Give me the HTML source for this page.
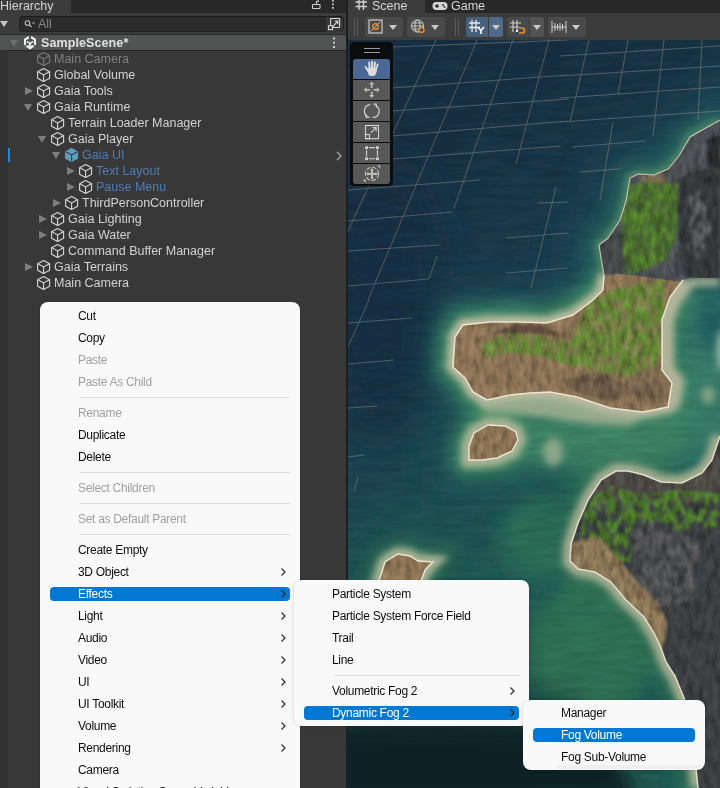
<!DOCTYPE html>
<html><head><meta charset="utf-8">
<style>
*{box-sizing:border-box}
html,body{margin:0;padding:0}
body{width:720px;height:788px;overflow:hidden;position:relative;background:#383838;font-family:"Liberation Sans",sans-serif;-webkit-font-smoothing:antialiased;}
.t,.mi{transform:translateZ(0)}
.abs{position:absolute}
.t{position:absolute;font-size:12.5px;line-height:16px;white-space:pre;letter-spacing:0}
.ard{position:absolute;width:0;height:0;border-left:4.3px solid transparent;border-right:4.3px solid transparent;border-top:7.5px solid #7e7e7e}
.arr{position:absolute;width:0;height:0;border-top:4.5px solid transparent;border-bottom:4.5px solid transparent;border-left:8px solid #7e7e7e}
.menu{position:absolute;background:#f9f9f9;border-radius:8px;box-shadow:0 0 3px rgba(0,0,0,0.10),-2px 1px 4px rgba(0,0,0,0.05)}
.mi{position:absolute;font-size:12px;line-height:16px;color:#0e0e0e;letter-spacing:-0.3px;white-space:pre}
.dis{color:#a0a0a0}
.sep{position:absolute;height:1px;background:#dedede}
.hl{position:absolute;background:#0078d4;border-radius:4px}
.chev{position:absolute;width:5px;height:5px;border-right:1.2px solid #2a2a2a;border-top:1.2px solid #2a2a2a;transform:rotate(45deg)}
.tb{position:absolute;background:#4a4a4a;border-radius:3px}
</style></head><body>


<div class="abs" style="left:0;top:0;width:346px;height:13px;background:#282828"></div>
<div class="abs" style="left:0;top:0;width:71px;height:13px;background:#3c3c3c"></div>
<div class="t" style="left:0;top:-2px;color:#d4d4d4;font-size:12.5px">Hierarchy</div>
<svg class="abs" style="left:310px;top:0" width="36" height="13" viewBox="0 0 36 13">
 <rect x="2.5" y="4.5" width="7.5" height="4" rx="0.8" fill="none" stroke="#d0d0d0" stroke-width="1.1"/>
 <path d="M6.5 4.5 V1.5 H8.2 V-1" fill="none" stroke="#d0d0d0" stroke-width="1.1"/>
 <rect x="22" y="0" width="1.8" height="1.8" fill="#c8c8c8"/><rect x="22" y="3.5" width="1.8" height="1.8" fill="#c8c8c8"/><rect x="22" y="7" width="1.8" height="1.8" fill="#c8c8c8"/>
</svg>
<div class="abs" style="left:0;top:13px;width:346px;height:22px;background:#3c3c3c"></div>
<div class="ard" style="left:0px;top:21px;border-top-color:#c4c4c4;border-left-width:4.5px;border-right-width:4.5px;border-top-width:6px"></div>
<div class="abs" style="left:19px;top:16px;width:325px;height:16px;background:#2b2b2b;border:1px solid #232323;border-top-color:#1c1c1c;border-radius:4px"></div>
<svg class="abs" style="left:24px;top:19px" width="12" height="10" viewBox="0 0 12 10"><circle cx="3.5" cy="4" r="2.3" fill="none" stroke="#bdbdbd" stroke-width="1.1"/><path d="M5.2 5.6 L7.5 8" stroke="#bdbdbd" stroke-width="1.2"/><path d="M8 3.5 h3 l-1.5 1.7z" fill="#bdbdbd"/></svg>
<div class="t" style="left:38px;top:16px;color:#858585">All</div>
<div class="abs" style="left:326px;top:17px;width:17px;height:15px;background:#383838;border-radius:0 4px 4px 0"></div>
<svg class="abs" style="left:326px;top:16px" width="17" height="16" viewBox="0 0 17 16"><rect x="4.6" y="2.5" width="9" height="9" rx="0.6" fill="none" stroke="#d8d8d8" stroke-width="1.1"/><rect x="2.5" y="9.8" width="4" height="3.8" fill="#3a3a3a" stroke="#d8d8d8" stroke-width="1.1"/><path d="M7 10.6 L11.6 5.2 M8.6 5 H11.8 V8.2" fill="none" stroke="#d8d8d8" stroke-width="1.1"/></svg>
<div class="abs" style="left:0;top:34px;width:346px;height:1px;background:#2a2a2a"></div>
<div class="abs" style="left:0;top:35px;width:346px;height:16px;background:#525453;border-bottom:1px solid #282828"></div>
<div class="abs" style="left:0;top:50px;width:8px;height:738px;background:#323232"></div>
<div class="abs" style="left:8px;top:148px;width:2px;height:14px;background:#1e88e5"></div>
<div class="ard" style="left:10px;top:40px;border-top-color:#6e6e6e"></div>
<svg class="abs" style="left:23px;top:35px" width="14" height="15" viewBox="0 0 14 15"><g fill="#f4f4f4"><path d="M5.6 1 L1 3.9 L1 10.6 L3 9.4 L3 5.3 L6.2 3.3 Z"/><path d="M8.4 1 L13 3.9 L13 10.6 L11 9.4 L11 5.3 L7.8 3.3 Z"/><path d="M7 7.6 L3.9 5.8 L3.9 7.5 L6.1 8.8 L6.1 11 L7.9 11 L7.9 8.8 L10.1 7.5 L10.1 5.8 Z"/><path d="M2.3 11.3 L7 14.6 L11.7 11.3 L9.3 10.1 L7 11.5 L4.7 10.1 Z"/><path d="M6.2 3.3 L7 4.6 L7.8 3.3 L7 1.2 Z" opacity="0.0"/></g></svg>
<div class="t" style="left:41px;top:35px;color:#e0e0e0;font-weight:bold;letter-spacing:0.1px">SampleScene*</div>
<svg class="abs" style="left:332px;top:37px" width="4" height="12"><rect x="1" y="0.5" width="2" height="2" fill="#c8c8c8"/><rect x="1" y="4.7" width="2" height="2" fill="#c8c8c8"/><rect x="1" y="9" width="2" height="2" fill="#c8c8c8"/></svg>

<svg class="abs" style="left:37px;top:52px" width="14" height="14" viewBox="0 0 14 14"><path d="M6.6 0.6 L12.6 3.7 L12.6 10.3 L6.6 13.4 L0.6 10.3 L0.6 3.7 Z" fill="none" stroke="#7a7a7a" stroke-width="1.1" stroke-linejoin="round"/><path d="M0.8 3.8 L6.6 6.9 L12.4 3.8 M6.6 6.9 L6.6 13.2" fill="none" stroke="#7a7a7a" stroke-width="1.1"/></svg>
<div class="t" style="left:54px;top:51px;color:#808080">Main Camera</div>
<svg class="abs" style="left:37px;top:68px" width="14" height="14" viewBox="0 0 14 14"><path d="M6.6 0.6 L12.6 3.7 L12.6 10.3 L6.6 13.4 L0.6 10.3 L0.6 3.7 Z" fill="none" stroke="#d8d8d8" stroke-width="1.1" stroke-linejoin="round"/><path d="M0.8 3.8 L6.6 6.9 L12.4 3.8 M6.6 6.9 L6.6 13.2" fill="none" stroke="#d8d8d8" stroke-width="1.1"/></svg>
<div class="t" style="left:54px;top:67px;color:#d2d2d2">Global Volume</div>
<div class="arr" style="left:25px;top:87px"></div>
<svg class="abs" style="left:37px;top:84px" width="14" height="14" viewBox="0 0 14 14"><path d="M6.6 0.6 L12.6 3.7 L12.6 10.3 L6.6 13.4 L0.6 10.3 L0.6 3.7 Z" fill="none" stroke="#d8d8d8" stroke-width="1.1" stroke-linejoin="round"/><path d="M0.8 3.8 L6.6 6.9 L12.4 3.8 M6.6 6.9 L6.6 13.2" fill="none" stroke="#d8d8d8" stroke-width="1.1"/></svg>
<div class="t" style="left:54px;top:83px;color:#d2d2d2">Gaia Tools</div>
<div class="ard" style="left:24px;top:104px"></div>
<svg class="abs" style="left:37px;top:100px" width="14" height="14" viewBox="0 0 14 14"><path d="M6.6 0.6 L12.6 3.7 L12.6 10.3 L6.6 13.4 L0.6 10.3 L0.6 3.7 Z" fill="none" stroke="#d8d8d8" stroke-width="1.1" stroke-linejoin="round"/><path d="M0.8 3.8 L6.6 6.9 L12.4 3.8 M6.6 6.9 L6.6 13.2" fill="none" stroke="#d8d8d8" stroke-width="1.1"/></svg>
<div class="t" style="left:54px;top:99px;color:#d2d2d2">Gaia Runtime</div>
<svg class="abs" style="left:51px;top:116px" width="14" height="14" viewBox="0 0 14 14"><path d="M6.6 0.6 L12.6 3.7 L12.6 10.3 L6.6 13.4 L0.6 10.3 L0.6 3.7 Z" fill="none" stroke="#d8d8d8" stroke-width="1.1" stroke-linejoin="round"/><path d="M0.8 3.8 L6.6 6.9 L12.4 3.8 M6.6 6.9 L6.6 13.2" fill="none" stroke="#d8d8d8" stroke-width="1.1"/></svg>
<div class="t" style="left:68px;top:115px;color:#d2d2d2">Terrain Loader Manager</div>
<div class="ard" style="left:38px;top:136px"></div>
<svg class="abs" style="left:51px;top:132px" width="14" height="14" viewBox="0 0 14 14"><path d="M6.6 0.6 L12.6 3.7 L12.6 10.3 L6.6 13.4 L0.6 10.3 L0.6 3.7 Z" fill="none" stroke="#d8d8d8" stroke-width="1.1" stroke-linejoin="round"/><path d="M0.8 3.8 L6.6 6.9 L12.4 3.8 M6.6 6.9 L6.6 13.2" fill="none" stroke="#d8d8d8" stroke-width="1.1"/></svg>
<div class="t" style="left:68px;top:131px;color:#d2d2d2">Gaia Player</div>
<div class="ard" style="left:52px;top:152px"></div>
<svg class="abs" style="left:65px;top:148px" width="14" height="14" viewBox="0 0 14 14"><path d="M6.6 0.6 L12.6 3.7 L12.6 10.3 L6.6 13.4 L0.6 10.3 L0.6 3.7 Z" fill="#5d9dbd" stroke="#5d9dbd" stroke-width="1.1" stroke-linejoin="round"/><path d="M0.8 3.8 L6.6 6.9 L12.4 3.8 M6.6 6.9 L6.6 13.2" fill="none" stroke="#2e3d45" stroke-width="1.1"/></svg>
<div class="t" style="left:82px;top:147px;color:#4e7db5">Gaia UI</div>
<div class="arr" style="left:67px;top:167px"></div>
<svg class="abs" style="left:79px;top:164px" width="14" height="14" viewBox="0 0 14 14"><path d="M6.6 0.6 L12.6 3.7 L12.6 10.3 L6.6 13.4 L0.6 10.3 L0.6 3.7 Z" fill="none" stroke="#d8d8d8" stroke-width="1.1" stroke-linejoin="round"/><path d="M0.8 3.8 L6.6 6.9 L12.4 3.8 M6.6 6.9 L6.6 13.2" fill="none" stroke="#d8d8d8" stroke-width="1.1"/></svg>
<div class="t" style="left:96px;top:163px;color:#4e7db5">Text Layout</div>
<div class="arr" style="left:67px;top:183px"></div>
<svg class="abs" style="left:79px;top:180px" width="14" height="14" viewBox="0 0 14 14"><path d="M6.6 0.6 L12.6 3.7 L12.6 10.3 L6.6 13.4 L0.6 10.3 L0.6 3.7 Z" fill="none" stroke="#d8d8d8" stroke-width="1.1" stroke-linejoin="round"/><path d="M0.8 3.8 L6.6 6.9 L12.4 3.8 M6.6 6.9 L6.6 13.2" fill="none" stroke="#d8d8d8" stroke-width="1.1"/></svg>
<div class="t" style="left:96px;top:179px;color:#4e7db5">Pause Menu</div>
<div class="arr" style="left:53px;top:199px"></div>
<svg class="abs" style="left:65px;top:196px" width="14" height="14" viewBox="0 0 14 14"><path d="M6.6 0.6 L12.6 3.7 L12.6 10.3 L6.6 13.4 L0.6 10.3 L0.6 3.7 Z" fill="none" stroke="#d8d8d8" stroke-width="1.1" stroke-linejoin="round"/><path d="M0.8 3.8 L6.6 6.9 L12.4 3.8 M6.6 6.9 L6.6 13.2" fill="none" stroke="#d8d8d8" stroke-width="1.1"/></svg>
<div class="t" style="left:82px;top:195px;color:#d2d2d2">ThirdPersonController</div>
<div class="arr" style="left:39px;top:215px"></div>
<svg class="abs" style="left:51px;top:212px" width="14" height="14" viewBox="0 0 14 14"><path d="M6.6 0.6 L12.6 3.7 L12.6 10.3 L6.6 13.4 L0.6 10.3 L0.6 3.7 Z" fill="none" stroke="#d8d8d8" stroke-width="1.1" stroke-linejoin="round"/><path d="M0.8 3.8 L6.6 6.9 L12.4 3.8 M6.6 6.9 L6.6 13.2" fill="none" stroke="#d8d8d8" stroke-width="1.1"/></svg>
<div class="t" style="left:68px;top:211px;color:#d2d2d2">Gaia Lighting</div>
<div class="arr" style="left:39px;top:231px"></div>
<svg class="abs" style="left:51px;top:228px" width="14" height="14" viewBox="0 0 14 14"><path d="M6.6 0.6 L12.6 3.7 L12.6 10.3 L6.6 13.4 L0.6 10.3 L0.6 3.7 Z" fill="none" stroke="#d8d8d8" stroke-width="1.1" stroke-linejoin="round"/><path d="M0.8 3.8 L6.6 6.9 L12.4 3.8 M6.6 6.9 L6.6 13.2" fill="none" stroke="#d8d8d8" stroke-width="1.1"/></svg>
<div class="t" style="left:68px;top:227px;color:#d2d2d2">Gaia Water</div>
<svg class="abs" style="left:51px;top:244px" width="14" height="14" viewBox="0 0 14 14"><path d="M6.6 0.6 L12.6 3.7 L12.6 10.3 L6.6 13.4 L0.6 10.3 L0.6 3.7 Z" fill="none" stroke="#d8d8d8" stroke-width="1.1" stroke-linejoin="round"/><path d="M0.8 3.8 L6.6 6.9 L12.4 3.8 M6.6 6.9 L6.6 13.2" fill="none" stroke="#d8d8d8" stroke-width="1.1"/></svg>
<div class="t" style="left:68px;top:243px;color:#d2d2d2">Command Buffer Manager</div>
<div class="arr" style="left:25px;top:263px"></div>
<svg class="abs" style="left:37px;top:260px" width="14" height="14" viewBox="0 0 14 14"><path d="M6.6 0.6 L12.6 3.7 L12.6 10.3 L6.6 13.4 L0.6 10.3 L0.6 3.7 Z" fill="none" stroke="#d8d8d8" stroke-width="1.1" stroke-linejoin="round"/><path d="M0.8 3.8 L6.6 6.9 L12.4 3.8 M6.6 6.9 L6.6 13.2" fill="none" stroke="#d8d8d8" stroke-width="1.1"/></svg>
<div class="t" style="left:54px;top:259px;color:#d2d2d2">Gaia Terrains</div>
<svg class="abs" style="left:37px;top:276px" width="14" height="14" viewBox="0 0 14 14"><path d="M6.6 0.6 L12.6 3.7 L12.6 10.3 L6.6 13.4 L0.6 10.3 L0.6 3.7 Z" fill="none" stroke="#d8d8d8" stroke-width="1.1" stroke-linejoin="round"/><path d="M0.8 3.8 L6.6 6.9 L12.4 3.8 M6.6 6.9 L6.6 13.2" fill="none" stroke="#d8d8d8" stroke-width="1.1"/></svg>
<div class="t" style="left:54px;top:275px;color:#d2d2d2">Main Camera</div>
<svg class="abs" style="left:334px;top:150px" width="10" height="12"><path d="M3 2 L7 6 L3 10" fill="none" stroke="#a8a8a8" stroke-width="1.3"/></svg>
<div class="abs" style="left:346px;top:0;width:2px;height:788px;background:#1f1f1f"></div>

<div class="abs" style="left:348px;top:0;width:372px;height:13px;background:#282828"></div>
<div class="abs" style="left:348px;top:0;width:77px;height:13px;background:#3c3c3c"></div>
<svg class="abs" style="left:355px;top:0" width="13" height="11" viewBox="0 0 13 11"><path d="M4 0 V10 M8.5 0 V10 M0.5 2 H12 M0.5 6.5 H12" stroke="#d0d0d0" stroke-width="1.4"/></svg>
<div class="t" style="left:372px;top:-2px;color:#d4d4d4;font-size:12.5px">Scene</div>
<svg class="abs" style="left:432px;top:1px" width="16" height="10" viewBox="0 0 16 10"><rect x="0.5" y="1" width="15" height="8" rx="4" fill="#d4d4d4"/><path d="M3 5 h4 M5 3 v4" stroke="#282828" stroke-width="1.3"/><circle cx="11" cy="4" r="0.9" fill="#282828"/><circle cx="12.5" cy="6" r="0.9" fill="#282828"/></svg>
<div class="t" style="left:451px;top:-2px;color:#d4d4d4;font-size:12.5px">Game</div>
<div class="abs" style="left:348px;top:13px;width:372px;height:27px;background:#3c3c3c"></div>
<div class="abs" style="left:354px;top:18px;width:1px;height:18px;background:#5a5a5a"></div>
<div class="abs" style="left:357px;top:18px;width:1px;height:18px;background:#5a5a5a"></div>
<div class="abs" style="left:455px;top:18px;width:1px;height:18px;background:#5a5a5a"></div>
<div class="abs" style="left:458px;top:18px;width:1px;height:18px;background:#5a5a5a"></div>
<div class="tb" style="left:365px;top:17px;width:38px;height:20px"></div>
<div class="tb" style="left:407px;top:17px;width:38px;height:20px"></div>
<div class="tb" style="left:466px;top:17px;width:22px;height:20px;background:#46607e;border-radius:3px 0 0 3px"></div>
<div class="tb" style="left:489px;top:17px;width:14px;height:20px;background:#4f6a89;border-radius:0 3px 3px 0"></div>
<div class="tb" style="left:507px;top:17px;width:22px;height:20px;border-radius:3px 0 0 3px"></div>
<div class="tb" style="left:530px;top:17px;width:14px;height:20px;background:#535353;border-radius:0 3px 3px 0"></div>
<div class="tb" style="left:548px;top:17px;width:38px;height:20px"></div>

<div class="ard" style="left:389px;top:25px;border-top-color:#c8c8c8;border-left-width:4.5px;border-right-width:4.5px;border-top-width:5px"></div>
<div class="ard" style="left:431px;top:25px;border-top-color:#c8c8c8;border-left-width:4.5px;border-right-width:4.5px;border-top-width:5px"></div>
<div class="ard" style="left:492px;top:25px;border-top-color:#c8c8c8;border-left-width:4.5px;border-right-width:4.5px;border-top-width:5px"></div>
<div class="ard" style="left:533px;top:25px;border-top-color:#c8c8c8;border-left-width:4.5px;border-right-width:4.5px;border-top-width:5px"></div>
<div class="ard" style="left:572px;top:25px;border-top-color:#c8c8c8;border-left-width:4.5px;border-right-width:4.5px;border-top-width:5px"></div>

<svg class="abs" style="left:368px;top:19px" width="16" height="16" viewBox="0 0 16 16"><rect x="1" y="1" width="13" height="13" fill="none" stroke="#d8d8d8" stroke-width="1.1"/><path d="M2.5 12.5 L12.5 2.5" stroke="#c8c8c8" stroke-width="0.9"/><circle cx="7.5" cy="7.5" r="2.8" fill="none" stroke="#e8902a" stroke-width="1.4"/></svg>
<svg class="abs" style="left:410px;top:18px" width="18" height="18" viewBox="0 0 18 18"><circle cx="7.5" cy="8" r="6" fill="none" stroke="#d0d0d0" stroke-width="1"/><ellipse cx="7.5" cy="8" rx="2.6" ry="6" fill="none" stroke="#d0d0d0" stroke-width="1"/><path d="M1.5 8 h12 M2.5 5 h10 M2.5 11 h10" stroke="#d0d0d0" stroke-width="0.9"/><circle cx="11.5" cy="12" r="2.5" fill="#4a4a4a" stroke="#e8902a" stroke-width="1.3"/></svg>
<svg class="abs" style="left:468px;top:19px" width="18" height="16" viewBox="0 0 18 16"><path d="M4 1 V13 M8 1 V13 M1 4 H12 M1 8.5 H12" stroke="#e8e8e8" stroke-width="1.3"/><path d="M10 8 L13 11.5 L16 8 M13 11.5 V15" fill="none" stroke="#ffffff" stroke-width="1.6"/></svg>
<svg class="abs" style="left:509px;top:19px" width="18" height="16" viewBox="0 0 18 16"><path d="M4 1 V13 M8 1 V11 M1 4 H12 M1 8 H10" stroke="#d0d0d0" stroke-width="1.1"/><path d="M10 9 h3 a2.5 2.5 0 0 1 0 5 h-3" fill="none" stroke="#e8902a" stroke-width="1.6"/><rect x="7" y="11" width="2" height="2" fill="#fff"/></svg>
<svg class="abs" style="left:551px;top:20px" width="18" height="14" viewBox="0 0 18 14"><path d="M1 1 V13 M15 1 V13 M1 7 H15 M4 3 V11 M6.5 4 V10 M9 3 V11 M11.5 4 V10" stroke="#d0d0d0" stroke-width="1"/></svg>


<svg class="abs" style="left:348px;top:40px" width="372" height="748" viewBox="348 40 372 748">
<defs>
 <linearGradient id="dk" gradientUnits="userSpaceOnUse" x1="0" y1="680" x2="0" y2="745"><stop offset="0" stop-color="#0f2127" stop-opacity="0"/><stop offset="1" stop-color="#0f2127" stop-opacity="1"/></linearGradient>
 <linearGradient id="wg" gradientUnits="userSpaceOnUse" x1="400" y1="150" x2="620" y2="560">
  <stop offset="0" stop-color="#182f42"/>
  <stop offset="0.35" stop-color="#1a394b"/>
  <stop offset="0.62" stop-color="#1c4550"/>
  <stop offset="0.85" stop-color="#1f5552"/>
  <stop offset="1" stop-color="#215a50"/>
 </linearGradient>
 <filter id="b22" filterUnits="userSpaceOnUse" x="200" y="-100" width="700" height="1000"><feGaussianBlur stdDeviation="22"/></filter>
 <filter id="b10" filterUnits="userSpaceOnUse" x="200" y="-100" width="700" height="1000"><feGaussianBlur stdDeviation="9"/></filter>
 <filter id="b4" filterUnits="userSpaceOnUse" x="200" y="-100" width="700" height="1000"><feGaussianBlur stdDeviation="3.5"/></filter>
 <filter id="b2" x="-20%" y="-20%" width="140%" height="140%"><feGaussianBlur stdDeviation="1.6"/></filter>
 <filter id="tex" x="0" y="0" width="100%" height="100%">
  <feTurbulence type="fractalNoise" baseFrequency="0.16 0.07" numOctaves="3" seed="7" result="n"/>
  <feColorMatrix in="n" type="matrix" values="0.65 0 0 0 0.17  0.65 0 0 0 0.17  0.65 0 0 0 0.17  0 0 0 0 1" result="g"/>
  <feBlend in="g" in2="SourceGraphic" mode="overlay" result="m"/>
  <feComposite in="m" in2="SourceGraphic" operator="in"/>
 </filter>
 <filter id="wtex" filterUnits="userSpaceOnUse" x="348" y="40" width="372" height="748">
  <feTurbulence type="fractalNoise" baseFrequency="0.03 0.18" numOctaves="2" seed="2" result="n"/>
  <feColorMatrix in="n" type="matrix" values="0.22 0 0 0 0.39  0.22 0 0 0 0.39  0.22 0 0 0 0.39  0 0 0 0 1" result="g"/>
  <feBlend in="g" in2="SourceGraphic" mode="overlay" result="m"/>
  <feComposite in="m" in2="SourceGraphic" operator="in"/>
 </filter>
 <filter id="mottle" filterUnits="userSpaceOnUse" x="348" y="40" width="372" height="748">
  <feTurbulence type="fractalNoise" baseFrequency="0.14 0.09" numOctaves="2" seed="11" result="n"/>
  <feColorMatrix in="n" type="matrix" values="0 0 0 0 0  0 0 0 0 0  0 0 0 0 0  7 0 0 0 -2.9" result="a"/>
  <feComposite in="SourceGraphic" in2="a" operator="in"/>
 </filter>
 <clipPath id="cn"><path d="M720 120 L690 137 L679 156 L668 169 L654 175 L638 174 L630 178 L626 201 L620 220 L608 238 L599 245 L601 258 L604 275 L603 290 L593 300 L573 315 L547 323 L520 322 L490 322 L463 325 L455 337 L453 367 L465 378 L473 392 L487 400 L510 395 L530 393 L550 392 L577 397 L610 408 L643 412 L668 407 L672 383 L662 370 L662 320 L670 297 L683 280 L690 278 L720 278 Z"/></clipPath>
 <clipPath id="cs"><path d="M720 436 L712 460 L702 473 L682 483 L661 482 L644 475 L628 471 L616 471 L601 480 L588 500 L578 523 L571 544 L570 561 L578 569 L595 572 L611 582 L626 600 L644 617 L654 633 L661 648 L666 662 L675 676 L684 698 L692 730 L698 788 L720 788 Z"/></clipPath>
</defs>
<g filter="url(#wtex)">
<rect x="348" y="40" width="372" height="748" fill="url(#wg)"/>
<g filter="url(#b22)">
 <path d="M720 120 L690 137 L679 156 L668 169 L654 175 L638 174 L630 178 L626 201 L620 220 L608 238 L599 245 L601 258 L604 275 L603 290 L593 300 L573 315 L547 323 L520 322 L490 322 L463 325 L455 337 L453 367 L465 378 L473 392 L487 400 L510 395 L530 393 L550 392 L577 397 L610 408 L643 412 L668 407 L672 383 L662 370 L662 320 L670 297 L683 280 L690 278 L720 278 Z" fill="#1f4e58" stroke="#1f4e58" stroke-width="56"/>
 <path d="M720 436 L712 460 L702 473 L682 483 L661 482 L644 475 L628 471 L616 471 L601 480 L588 500 L578 523 L571 544 L570 561 L578 569 L595 572 L611 582 L626 600 L644 617 L654 633 L661 648 L666 662 L675 676 L684 698 L692 730 L698 788 L720 788 Z" fill="#1f5652" stroke="#1f5652" stroke-width="90"/>
 <path d="M469 460 L469 446 L474 433 L488 425 L505 426 L516 432 L518 440 L512 451 L497 458 L482 460 Z" fill="#1f5255" stroke="#1f5255" stroke-width="56"/>
 <path d="M378 584 L385 562 L398 554 L410 556 L418 561 L433 562 L425 570 L420 584 Z" fill="#1f5250" stroke="#1f5250" stroke-width="56"/>
 <ellipse cx="560" cy="440" rx="90" ry="35" fill="#256458"/>
 <ellipse cx="430" cy="780" rx="120" ry="55" fill="#10242a"/>
 <ellipse cx="380" cy="300" rx="60" ry="140" fill="#182f42"/>
</g>
<g filter="url(#b10)">
 <path d="M604 275 L603 290 L593 300 L573 315 L547 323 L520 322 L490 322 L463 325 L455 337 L453 367 L465 378 L473 392 L487 400 L510 395 L530 393 L550 392 L577 397 L610 408 L643 412 L668 407 L672 383 L662 370 L662 320 L670 297 L683 280" fill="none" stroke="#3a8462" stroke-width="36"/>
 <path d="M720 120 L690 137 L679 156 L668 169 L654 175 L638 174 L630 178 L626 201 L620 220 L608 238 L599 245 L601 258 L604 275" fill="none" stroke="#2b6a5a" stroke-width="20"/>
 <path d="M720 436 L712 460 L702 473 L682 483 L661 482 L644 475 L628 471 L616 471 L601 480 L588 500 L578 523 L571 544 L570 561 L578 569 L595 572 L611 582 L626 600 L644 617 L654 633 L661 648 L666 662 L675 676 L684 698 L692 730 L698 788 L720 788 Z" fill="#2e6e54" stroke="#2e6e54" stroke-width="34"/>
 <path d="M469 460 L469 446 L474 433 L488 425 L505 426 L516 432 L518 440 L512 451 L497 458 L482 460 Z" fill="#3a8462" stroke="#3a8462" stroke-width="32"/>
 <path d="M378 584 L385 562 L398 554 L410 556 L418 561 L433 562 L425 570 L420 584 Z" fill="#2e6c52" stroke="#2e6c52" stroke-width="26"/>
 <rect x="684" y="292" width="50" height="170" fill="#367a66"/>
 <ellipse cx="712" cy="325" rx="16" ry="28" fill="#1f5a5e"/>
 <ellipse cx="690" cy="460" rx="22" ry="18" fill="#2a6a5e"/>
 <ellipse cx="590" cy="440" rx="100" ry="28" fill="#3a8062"/>
 <ellipse cx="590" cy="650" rx="60" ry="70" fill="#2d6e52"/>
 <ellipse cx="540" cy="540" rx="40" ry="40" fill="#2a6a55"/>
</g>
</g>
<g filter="url(#b4)">
 <path d="M604 275 L603 290 L593 300 L573 315 L547 323 L520 322 L490 322 L463 325 L455 337 L453 367 L465 378 L473 392 L487 400 L510 395 L530 393 L550 392 L577 397 L610 408 L643 412 L668 407 L672 383 L662 370 L662 320 L670 297 L683 280" fill="none" stroke="#bcbca0" stroke-width="13"/>
 <path d="M469 460 L469 446 L474 433 L488 425 L505 426 L516 432 L518 440 L512 451 L497 458 L482 460 Z" fill="none" stroke="#a8b494" stroke-width="16"/>
 <path d="M378 584 L385 562 L398 554 L410 556 L418 561 L433 562 L425 570 L420 584 Z" fill="none" stroke="#a8b494" stroke-width="14"/>
 <path d="M720 436 L712 460 L702 473 L682 483 L661 482 L644 475 L628 471 L616 471 L601 480 L588 500 L578 523 L571 544 L570 561 L578 569 L595 572 L611 582 L626 600 L644 617 L654 633 L661 648 L666 662 L675 676 L684 698 L692 730 L698 788" fill="none" stroke="#a4ae92" stroke-width="15"/>
 <path d="M720 120 L690 137 L679 156 L668 169 L654 175 L638 174 L630 178 L626 201 L620 220 L608 238 L599 245 L601 258 L604 275" fill="none" stroke="#5a9070" stroke-width="6"/>
 <ellipse cx="553" cy="452" rx="10" ry="14" fill="#98ac90" opacity="0.85"/>
 <path d="M476 402 L520 397 L560 398 L600 410 L645 416 L630 426 L590 424 L550 418 L510 414 L484 412 Z" fill="#a4b092" opacity="0.85"/>
 <path d="M683 284 L700 282 L720 282" fill="none" stroke="#a8b494" stroke-width="8"/>
 <path d="M683 282 L670 297 L662 320 L662 370 L672 383 L668 407" fill="none" stroke="#b0b498" stroke-width="24"/>
 <ellipse cx="708" cy="395" rx="7" ry="9" fill="#a8b494" opacity="0.7"/>
 <ellipse cx="722" cy="350" rx="6" ry="20" fill="#8ab0a0"/>
</g>
<path d="M320 680 L560 680 L600 730 L640 800 L320 800 Z" fill="url(#dk)" filter="url(#b10)"/>
<g stroke="#a89a8c" stroke-width="1" opacity="0.42"><line x1="392" y1="88" x2="568" y2="75"/><line x1="392" y1="111" x2="568" y2="99"/><line x1="392" y1="136" x2="568" y2="121"/><line x1="392" y1="159" x2="560" y2="146"/><line x1="348" y1="190" x2="480" y2="180"/><line x1="348" y1="221" x2="452" y2="212"/><line x1="348" y1="251" x2="439" y2="245"/><line x1="348" y1="286" x2="429" y2="279"/><line x1="538" y1="203" x2="568" y2="202"/><line x1="506" y1="238" x2="568" y2="233"/><line x1="506" y1="273" x2="568" y2="268"/><line x1="560" y1="56" x2="720" y2="46"/><line x1="560" y1="76" x2="720" y2="66"/><line x1="560" y1="98" x2="720" y2="87"/><line x1="560" y1="122" x2="720" y2="111"/><line x1="572" y1="147" x2="645" y2="141"/><line x1="580" y1="172" x2="620" y2="169"/><line x1="392" y1="47" x2="568" y2="40"/><line x1="436" y1="40" x2="348" y2="231"/><line x1="477" y1="40" x2="368" y2="300"/><line x1="513" y1="40" x2="454" y2="208"/><line x1="549" y1="40" x2="516" y2="164"/><line x1="556" y1="187" x2="531" y2="288"/><line x1="437" y1="256" x2="429" y2="279"/><line x1="348" y1="323" x2="412" y2="318"/><line x1="348" y1="364" x2="394" y2="360"/><line x1="348" y1="408" x2="377" y2="406"/><line x1="348" y1="457" x2="364" y2="455"/><line x1="369" y1="300" x2="348" y2="347"/><line x1="358" y1="477" x2="354" y2="491"/><line x1="589" y1="40" x2="570" y2="122"/><line x1="628" y1="40" x2="618" y2="94"/><line x1="664" y1="40" x2="653" y2="136"/><line x1="702" y1="40" x2="698" y2="120"/><line x1="613" y1="122" x2="600" y2="200"/></g>
<!-- north landmass -->
<path d="M720 120 L690 137 L679 156 L668 169 L654 175 L638 174 L630 178 L626 201 L620 220 L608 238 L599 245 L601 258 L604 275 L603 290 L593 300 L573 315 L547 323 L520 322 L490 322 L463 325 L455 337 L453 367 L465 378 L473 392 L487 400 L510 395 L530 393 L550 392 L577 397 L610 408 L643 412 L668 407 L672 383 L662 370 L662 320 L670 297 L683 280 L690 278 L720 278 Z" fill="#8b7355"/>
<g clip-path="url(#cn)">
 <g filter="url(#tex)">
 <rect x="440" y="100" width="290" height="330" fill="#8b7355"/>
 <path d="M596 100 L720 100 L720 280 L680 282 L640 276 L600 272 Z" fill="#4c5055"/>
 <g filter="url(#b2)">
 <path d="M676 180 L690 172 L708 168 L720 165 L720 280 L682 276 L678 230 Z" fill="#36393b"/>
 <path d="M684 200 L700 190 L712 230 L700 260 L688 250 Z" fill="#5a5d60" filter="url(#mottle)"/>
 <path d="M707 140 L720 134 L720 168 L708 166 Z" fill="#26292b"/>
 <path d="M640 176 L662 172 L666 182 L645 184 Z" fill="#7c6a52"/>
 <path d="M627 186 L650 182 L678 184 L678 230 L668 258 L650 268 L627 275 L621 240 L623 200 Z" fill="#52802a"/>
 <path d="M627 186 L650 182 L678 184 L678 230 L668 258 L650 268 L627 275 L621 240 L623 200 Z" fill="#3c4240" filter="url(#mottle)" opacity="0.45"/>
 <path d="M598 242 L622 232 L624 272 L604 276 Z" fill="#45484a"/>
 <path d="M604 280 L660 282 L684 282 L690 292 L604 294 Z" fill="#8b7355"/>
 <path d="M490 334 L515 324 L545 326 L562 336 L535 334 L510 333 Z" fill="#5e4e3c"/>
 <path d="M480 347 L496 338 L512 333 L535 336 L570 343 L590 300 L628 285 L663 279 L666 314 L658 367 L628 376 L593 370 L570 365 L540 356 L510 352 L486 359 Z" fill="#5a8a2c" filter="url(#mottle)"/>
 <path d="M480 347 L496 338 L512 333 L535 336 L570 343 L590 300 L628 285 L663 279 L666 314 L658 367 L628 376 L593 370 L570 365 L540 356 L510 352 L486 359 Z" fill="#66803c" opacity="0.5"/>
 
 <path d="M630 378 L660 362 L670 400 L640 408 Z" fill="#7a6650"/>
 <path d="M560 380 L600 372 L640 392 L610 402 L575 392 Z" fill="#6e5c48"/>
 </g>
 </g>
</g>
<path d="M720 120 L690 137 L679 156 L668 169 L654 175 L638 174 L630 178 L626 201 L620 220 L608 238 L599 245 L601 258 L604 275" fill="none" stroke="#c8c4b0" stroke-width="1.1"/>
<path d="M604 275 L603 290 L593 300 L573 315 L547 323 L520 322 L490 322 L463 325 L455 337 L453 367 L465 378 L473 392 L487 400 L510 395 L530 393 L550 392 L577 397 L610 408 L643 412 L668 407 L672 383 L662 370 L662 320 L670 297 L683 280" fill="none" stroke="#ece4d0" stroke-width="1.5"/>
<!-- small islands -->
<g filter="url(#tex)"><path d="M469 460 L469 446 L474 433 L488 425 L505 426 L516 432 L518 440 L512 451 L497 458 L482 460 Z" fill="#8b7355"/><path d="M378 584 L385 562 L398 554 L410 556 L418 561 L433 562 L425 570 L420 584 Z" fill="#8b7355"/></g>
<path d="M469 460 L469 446 L474 433 L488 425 L505 426 L516 432 L518 440 L512 451 L497 458 L482 460 Z" fill="none" stroke="#ece4d0" stroke-width="1.4"/>
<path d="M378 584 L385 562 L398 554 L410 556 L418 561 L433 562 L425 570 L420 584 Z" fill="none" stroke="#ece4d0" stroke-width="1.4"/>
<!-- south landmass -->
<path d="M720 436 L712 460 L702 473 L682 483 L661 482 L644 475 L628 471 L616 471 L601 480 L588 500 L578 523 L571 544 L570 561 L578 569 L595 572 L611 582 L626 600 L644 617 L654 633 L661 648 L666 662 L675 676 L684 698 L692 730 L698 788 L720 788 Z" fill="#3c4043"/>
<g clip-path="url(#cs)">
 <g filter="url(#tex)">
 <rect x="560" y="420" width="170" height="370" fill="#3c3f42"/>
 <g filter="url(#b2)">
 <path d="M601 476 L628 466 L661 478 L702 470 L720 450 L720 500 L680 505 L620 500 L590 505 Z" fill="#4e4a44"/>
 <g filter="url(#mottle)">
 <path d="M586 500 L612 486 L640 494 L636 530 L630 562 L600 560 L580 545 Z" fill="#4e7c2a"/>
 <path d="M623 496 L680 490 L720 494 L720 526 L680 530 L640 528 Z" fill="#4e7c2a"/>
 <path d="M630 530 L660 520 L700 545 L695 600 L650 610 L636 570 Z" fill="#58595a"/>
 </g>
 <path d="M566 544 L598 536 L616 556 L636 580 L648 592 L660 606 L667 622 L665 640 L662 650 L640 630 L610 590 L580 575 L565 565 Z" fill="#8a7656"/>
 </g>
 </g>
</g>
<path d="M720 436 L712 460 L702 473 L682 483 L661 482 L644 475 L628 471 L616 471 L601 480 L588 500 L578 523 L571 544 L570 561 L578 569 L595 572 L611 582 L626 600 L644 617 L654 633 L661 648 L666 662 L675 676 L684 698 L692 730 L698 788" fill="none" stroke="#e4dccc" stroke-width="1.5"/>
</svg>


<div class="abs" style="left:350px;top:42px;width:43px;height:144px;background:#0b0b0b;border-radius:4px;opacity:0.95"></div>
<div class="abs" style="left:364px;top:48px;width:16px;height:1px;background:#9a9a9a"></div>
<div class="abs" style="left:364px;top:52px;width:16px;height:1px;background:#9a9a9a"></div>
<div class="abs" style="left:353px;top:59px;width:37px;height:20px;background:#4a6893;border-radius:3px 3px 0 0"></div>
<div class="abs" style="left:353px;top:80px;width:37px;height:20px;background:#585858"></div>
<div class="abs" style="left:353px;top:101px;width:37px;height:20px;background:#585858"></div>
<div class="abs" style="left:353px;top:122px;width:37px;height:20px;background:#585858"></div>
<div class="abs" style="left:353px;top:143px;width:37px;height:20px;background:#585858"></div>
<div class="abs" style="left:353px;top:164px;width:37px;height:20px;background:#585858;border-radius:0 0 3px 3px"></div>
<svg class="abs" style="left:363px;top:59px" width="18" height="20" viewBox="0 0 18 20"><g stroke="#dcdcdc" stroke-linecap="round" fill="none"><path d="M6.6 10 L6.2 3.6" stroke-width="2"/><path d="M9 10 L9.2 2.6" stroke-width="2"/><path d="M11.3 10 L12 3.6" stroke-width="2"/><path d="M13 10.5 L14.7 5.4" stroke-width="1.8"/><path d="M5.2 12 L2.6 8" stroke-width="2"/></g><path d="M4.6 10.5 Q5 8.5 7 8.5 L12 8.5 Q14.2 9 14 11 L13 15 Q12 17 10 17 L8 17 Q6 17 5.2 15 Z" fill="#dcdcdc"/></svg>
<svg class="abs" style="left:362px;top:80px" width="19" height="19" viewBox="0 0 19 19"><g fill="#c4c4bc"><path d="M9.7 1.8 L12.3 4.6 L7.1 4.6 Z"/><path d="M9.7 17.8 L12.3 15 L7.1 15 Z"/><path d="M1.8 9.8 L4.6 7.2 L4.6 12.4 Z"/><path d="M17.6 9.8 L14.8 7.2 L14.8 12.4 Z"/></g><g stroke="#c4c4bc" stroke-width="1.6"><path d="M9.7 4.5 V8 M9.7 11.6 V15 M4.5 9.8 H8 M11.4 9.8 H14.9"/></g></svg>
<svg class="abs" style="left:362px;top:101px" width="19" height="19" viewBox="0 0 19 19"><g fill="none" stroke="#d0d0d0" stroke-width="1.2"><path d="M8.2 3.6 A6.2 6.2 0 0 0 5.6 15.2"/><path d="M10.6 16.4 A6.2 6.2 0 0 0 13.6 4.6"/><path d="M3.3 12.8 L4.2 16.4 L7.6 16.2"/><path d="M11.4 3.4 L14.2 3 L14.6 6.4"/></g></svg>
<svg class="abs" style="left:362px;top:123px" width="19" height="19" viewBox="0 0 19 19"><g fill="none" stroke="#d4d4d4" stroke-width="1.1"><rect x="3.5" y="2.5" width="13" height="13.2"/><rect x="3.5" y="11.5" width="4" height="4.2"/><path d="M8.9 9.8 L14 4.9 M10.6 4.6 H14.2 V8.2"/></g></svg>
<svg class="abs" style="left:362px;top:144px" width="19" height="19" viewBox="0 0 19 19"><g fill="#d0d0d0"><rect x="3.1" y="2.3" width="3" height="2.7"/><rect x="13.9" y="2.3" width="3" height="2.7"/><rect x="3.1" y="13.4" width="3" height="2.7"/><rect x="13.9" y="13.4" width="3" height="2.7"/></g><path d="M7 3.6 H13 M7 14.8 H13 M4.6 5.8 V12.6 M15.4 5.8 V12.6" stroke="#d0d0d0" stroke-width="1.1"/></svg>
<svg class="abs" style="left:362px;top:164px" width="19" height="19" viewBox="0 0 19 19"><circle cx="10" cy="9.9" r="6.6" fill="none" stroke="#c8c8c0" stroke-width="1.1" stroke-dasharray="4.5 1.7"/><g stroke="#c8c8c0" stroke-width="1.8"><path d="M10 5 V14.8 M5.1 9.9 H14.9"/></g><g fill="#c8c8c0"><path d="M10 4.2 L11.8 6.2 L8.2 6.2 Z M10 15.6 L11.8 13.6 L8.2 13.6 Z M4.3 9.9 L6.3 8.1 L6.3 11.7 Z M15.7 9.9 L13.7 8.1 L13.7 11.7 Z"/><path d="M15.4 1.6 L18.2 1.6 L18.2 4.4 Z M1.8 17.6 L1.8 14.6 L4.8 17.6 Z"/></g></svg>

<div class="menu" style="left:40px;top:302px;width:260px;height:520px"></div>
<div class="sep" style="left:80px;top:397px;width:211px"></div>
<div class="sep" style="left:80px;top:472px;width:211px"></div>
<div class="sep" style="left:80px;top:503px;width:211px"></div>
<div class="sep" style="left:80px;top:534px;width:211px"></div>
<div class="hl" style="left:50px;top:587px;width:240px;height:14px"></div>
<div class="mi" style="left:78px;top:308px;">Cut</div>
<div class="mi" style="left:78px;top:330px;">Copy</div>
<div class="mi dis" style="left:78px;top:352px;">Paste</div>
<div class="mi dis" style="left:78px;top:374px;">Paste As Child</div>
<div class="mi dis" style="left:78px;top:405px;">Rename</div>
<div class="mi" style="left:78px;top:427px;">Duplicate</div>
<div class="mi" style="left:78px;top:449px;">Delete</div>
<div class="mi dis" style="left:78px;top:480px;">Select Children</div>
<div class="mi dis" style="left:78px;top:511px;">Set as Default Parent</div>
<div class="mi" style="left:78px;top:542px;">Create Empty</div>
<div class="mi" style="left:78px;top:564px;">3D Object</div>
<div class="mi" style="left:78px;top:586px;color:#fff;">Effects</div>
<div class="mi" style="left:78px;top:608px;">Light</div>
<div class="mi" style="left:78px;top:630px;">Audio</div>
<div class="mi" style="left:78px;top:652px;">Video</div>
<div class="mi" style="left:78px;top:674px;">UI</div>
<div class="mi" style="left:78px;top:696px;">UI Toolkit</div>
<div class="mi" style="left:78px;top:718px;">Volume</div>
<div class="mi" style="left:78px;top:740px;">Rendering</div>
<div class="mi" style="left:78px;top:762px;">Camera</div>
<div class="mi" style="left:78px;top:784px;">Visual Scripting Scene Variables</div>
<svg class="abs" style="left:280px;top:567px" width="7" height="10" viewBox="0 0 7 10"><path d="M1.5 1.5 L5 5 L1.5 8.5" fill="none" stroke="#2a2a2a" stroke-width="1.2"/></svg>
<svg class="abs" style="left:280px;top:589px" width="7" height="10" viewBox="0 0 7 10"><path d="M1.5 1.5 L5 5 L1.5 8.5" fill="none" stroke="#2a2a2a" stroke-width="1.2"/></svg>
<svg class="abs" style="left:280px;top:611px" width="7" height="10" viewBox="0 0 7 10"><path d="M1.5 1.5 L5 5 L1.5 8.5" fill="none" stroke="#2a2a2a" stroke-width="1.2"/></svg>
<svg class="abs" style="left:280px;top:633px" width="7" height="10" viewBox="0 0 7 10"><path d="M1.5 1.5 L5 5 L1.5 8.5" fill="none" stroke="#2a2a2a" stroke-width="1.2"/></svg>
<svg class="abs" style="left:280px;top:655px" width="7" height="10" viewBox="0 0 7 10"><path d="M1.5 1.5 L5 5 L1.5 8.5" fill="none" stroke="#2a2a2a" stroke-width="1.2"/></svg>
<svg class="abs" style="left:280px;top:677px" width="7" height="10" viewBox="0 0 7 10"><path d="M1.5 1.5 L5 5 L1.5 8.5" fill="none" stroke="#2a2a2a" stroke-width="1.2"/></svg>
<svg class="abs" style="left:280px;top:699px" width="7" height="10" viewBox="0 0 7 10"><path d="M1.5 1.5 L5 5 L1.5 8.5" fill="none" stroke="#2a2a2a" stroke-width="1.2"/></svg>
<svg class="abs" style="left:280px;top:721px" width="7" height="10" viewBox="0 0 7 10"><path d="M1.5 1.5 L5 5 L1.5 8.5" fill="none" stroke="#2a2a2a" stroke-width="1.2"/></svg>
<svg class="abs" style="left:280px;top:743px" width="7" height="10" viewBox="0 0 7 10"><path d="M1.5 1.5 L5 5 L1.5 8.5" fill="none" stroke="#2a2a2a" stroke-width="1.2"/></svg>
<div class="menu" style="left:294px;top:580px;width:235px;height:146px"></div>
<div class="mi" style="left:332px;top:586px;">Particle System</div>
<div class="mi" style="left:332px;top:608px;">Particle System Force Field</div>
<div class="mi" style="left:332px;top:630px;">Trail</div>
<div class="mi" style="left:332px;top:652px;">Line</div>
<div class="mi" style="left:332px;top:683px;">Volumetric Fog 2</div>
<div class="hl" style="left:304px;top:706px;width:215px;height:14px"></div>
<div class="mi" style="left:332px;top:705px;color:#fff;">Dynamic Fog 2</div>
<div class="sep" style="left:333px;top:675px;width:187px"></div>
<svg class="abs" style="left:509px;top:686px" width="7" height="10" viewBox="0 0 7 10"><path d="M1.5 1.5 L5 5 L1.5 8.5" fill="none" stroke="#2a2a2a" stroke-width="1.2"/></svg>
<svg class="abs" style="left:509px;top:708px" width="7" height="10" viewBox="0 0 7 10"><path d="M1.5 1.5 L5 5 L1.5 8.5" fill="none" stroke="#2a2a2a" stroke-width="1.2"/></svg>
<div class="menu" style="left:523px;top:700px;width:182px;height:70px"></div>
<div class="hl" style="left:533px;top:728px;width:162px;height:14px"></div>
<div class="abs" style="left:557px;top:765px;width:146px;height:4px;background:#efefef;border-radius:0 0 6px 0"></div>
<div class="mi" style="left:561px;top:705px;">Manager</div>
<div class="mi" style="left:561px;top:727px;color:#fff;">Fog Volume</div>
<div class="mi" style="left:561px;top:749px;">Fog Sub-Volume</div>
</body></html>
